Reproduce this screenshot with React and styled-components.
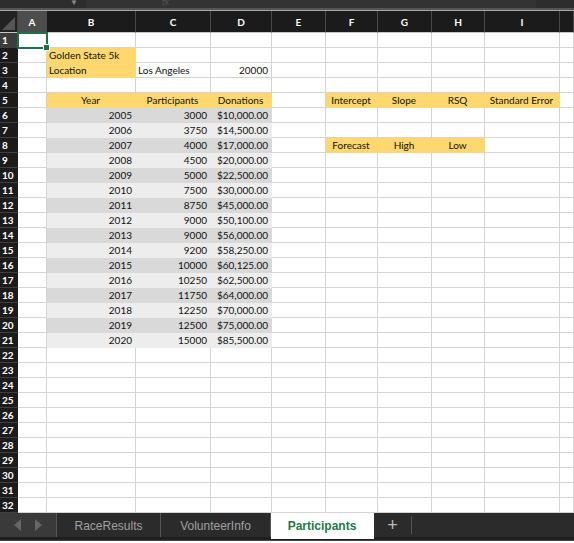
import React from "react";
import styled, { createGlobalStyle } from "styled-components";

const Global = createGlobalStyle`
  html, body { margin: 0; padding: 0; background: #ffffff; }
  body { width: 574px; height: 543px; overflow: hidden; font-family: "Lato", "Liberation Sans", sans-serif; }
  * { box-sizing: border-box; }
`;

const COLS = [18, 29, 89, 75, 61, 54, 52, 54, 53, 75, 14];
const LETTERS = ["A", "B", "C", "D", "E", "F", "G", "H", "I", ""];
const YELLOW = "#fed86f";
const DARK = "#d9d9d9";
const LIGHT = "#ededed";

const Page = styled.div`
  width: 574px;
  height: 543px;
  display: flex;
  flex-direction: column;
  background: #fff;
`;

const TopBar = styled.div`
  height: 11px;
  background: #2d2d2d;
  border-bottom: 1px solid #a8a8a8;
  box-shadow: inset 0 -2px 0 #555;
  display: flex;
  align-items: flex-start;
  padding-left: 70px;
  gap: 8px;
  overflow: hidden;
`;

const Caret = styled.span`
  color: #8a8a8a;
  font-size: 8px;
  line-height: 6px;
  margin-top: -1px;
`;

const FormulaBox = styled.div`
  height: 8px;
  width: 450px;
  background: #333;
  color: #555;
  font-size: 9px;
  font-style: italic;
  line-height: 4px;
  padding-left: 76px;
`;

const Grid = styled.div`
  display: grid;
  grid-template-columns: ${COLS.map((c) => c + "px").join(" ")};
  grid-template-rows: 22px repeat(32, 15px);
  position: relative;
`;

const Corner = styled.div`
  background: #222;
  border-right: 1px solid #444;
  border-bottom: 1px solid #c8c8c8;
  position: relative;
  &::after {
    content: "";
    position: absolute;
    right: 2px;
    bottom: 2px;
    width: 0;
    height: 0;
    border-left: 13px solid transparent;
    border-bottom: 13px solid #555;
  }
`;

const ColHead = styled.div`
  background: ${(p) => (p.$sel ? "#4d4d4d" : "#1b1b1b")};
  border-right: 1px solid #4a4a4a;
  border-bottom: 1px solid #c8c8c8;
  color: #fff;
  font-family: "Lato", "Liberation Sans", sans-serif;
  font-weight: bold;
  font-size: 10px;
  display: flex;
  align-items: center;
  justify-content: center;
`;

const RowHead = styled.div`
  background: ${(p) => (p.$sel ? "#3c3c3c" : "#1b1b1b")};
  border-bottom: 1px solid #3e3e3e;
  color: #fff;
  font-family: "Lato", sans-serif;
  font-weight: bold;
  font-size: 10px;
  line-height: 14px;
  padding-left: 2px;
`;

const Cell = styled.div`
  background: ${(p) => p.$fill || "#fff"};
  border-right: 1px solid ${(p) => p.$fill || "#d4d4d4"};
  border-bottom: 1px solid ${(p) => p.$fill || "#d4d4d4"};
  color: #111;
  font-family: "Lato", sans-serif;
  font-size: 10px;
  line-height: 15px;
  white-space: nowrap;
  overflow: visible;
  text-align: ${(p) => p.$align || "left"};
  padding: 0 3px 0 2px;
  position: relative;
`;

const Selection = styled.div`
  position: absolute;
  left: 17px;
  top: 21px;
  width: 31px;
  height: 17px;
  border: 2px solid #1e7145;
  pointer-events: none;
  &::after {
    content: "";
    position: absolute;
    right: -4px;
    bottom: -4px;
    width: 5px;
    height: 5px;
    background: #1e7145;
    border: 1px solid #fff;
  }
`;

const TabBar = styled.div`
  height: 27px;
  display: flex;
  background: #2b2b2b;
  border-bottom: 3px solid #1f1f1f;
  box-shadow: 0 1px 0 #444;
`;

const Nav = styled.div`
  width: 57px;
  background: #3a3a3a;
  display: flex;
  align-items: center;
  justify-content: center;
  gap: 14px;
  border-right: 1px solid #555;
`;

const Arrow = styled.span`
  width: 0;
  height: 0;
  border-top: 6px solid transparent;
  border-bottom: 6px solid transparent;
  ${(p) => (p.$left ? "border-right: 7px solid #666;" : "border-left: 7px solid #666;")}
`;

const Tab = styled.div`
  width: ${(p) => p.$w}px;
  display: flex;
  align-items: center;
  justify-content: center;
  font-family: "Liberation Sans", sans-serif;
  font-size: 12px;
  color: ${(p) => (p.$active ? "#1e7a45" : "#a0a0a0")};
  font-weight: ${(p) => (p.$active ? "bold" : "normal")};
  background: ${(p) => (p.$active ? "#fff" : "transparent")};
  border-right: 1px solid ${(p) => (p.$active ? "#fff" : "#555")};
  margin-bottom: ${(p) => (p.$active ? "-2px" : "0")};
  margin-top: ${(p) => (p.$active ? "-1px" : "0")};
  padding-top: 1px;
`;

const Plus = styled.div`
  width: 38px;
  display: flex;
  align-items: center;
  justify-content: center;
  color: #bbb;
  font-family: "Liberation Sans", sans-serif;
  font-size: 18px;
  border-right: 1px solid #555;
  margin: 3px 0;
`;

const years = [2005, 2006, 2007, 2008, 2009, 2010, 2011, 2012, 2013, 2014, 2015, 2016, 2017, 2018, 2019, 2020];
const parts = [3000, 3750, 4000, 4500, 5000, 7500, 8750, 9000, 9000, 9200, 10000, 10250, 11750, 12250, 12500, 15000];
const dons = ["$10,000.00", "$14,500.00", "$17,000.00", "$20,000.00", "$22,500.00", "$30,000.00", "$45,000.00", "$50,100.00", "$56,000.00", "$58,250.00", "$60,125.00", "$62,500.00", "$64,000.00", "$70,000.00", "$75,000.00", "$85,500.00"];

function buildCells() {
  const data = {};
  const set = (r, c, v) => {
    data[r] = data[r] || {};
    data[r][c] = v;
  };
  set(2, 1, { text: "Golden State 5k", fill: YELLOW });
  set(3, 1, { text: "Location", fill: YELLOW });
  set(3, 2, { text: "Los Angeles" });
  set(3, 3, { text: "20000", align: "right" });
  ["Year", "Participants", "Donations"].forEach((t, i) => set(5, i + 1, { text: t, fill: YELLOW, align: "center" }));
  ["Intercept", "Slope", "RSQ", "Standard Error"].forEach((t, i) => set(5, i + 5, { text: t, fill: YELLOW, align: "center" }));
  ["Forecast", "High", "Low"].forEach((t, i) => set(8, i + 5, { text: t, fill: YELLOW, align: "center" }));
  years.forEach((y, i) => {
    const r = 6 + i;
    const fill = i % 2 === 0 ? DARK : LIGHT;
    set(r, 1, { text: String(y), fill, align: "right" });
    set(r, 2, { text: String(parts[i]), fill, align: "right" });
    set(r, 3, { text: dons[i], fill, align: "right" });
  });
  return data;
}

export default function App() {
  const data = buildCells();
  const rows = [];
  for (let r = 1; r <= 32; r++) {
    rows.push(
      <RowHead key={"h" + r} $sel={r === 1}>
        {r}
      </RowHead>
    );
    for (let c = 0; c < 10; c++) {
      const d = (data[r] && data[r][c]) || {};
      rows.push(
        <Cell key={r + "-" + c} $fill={d.fill} $align={d.align}>
          {d.text}
        </Cell>
      );
    }
  }
  return (
    <Page>
      <Global />
      <TopBar>
        <Caret>▼</Caret>
        <FormulaBox>fx</FormulaBox>
      </TopBar>
      <Grid>
        <Corner />
        {LETTERS.map((l, i) => (
          <ColHead key={"c" + i} $sel={i === 0}>
            {l}
          </ColHead>
        ))}
        {rows}
        <Selection />
      </Grid>
      <TabBar>
        <Nav>
          <Arrow $left />
          <Arrow />
        </Nav>
        <Tab $w={104}>RaceResults</Tab>
        <Tab $w={110}>VolunteerInfo</Tab>
        <Tab $w={103} $active>Participants</Tab>
        <Plus>+</Plus>
      </TabBar>
    </Page>
  );
}
